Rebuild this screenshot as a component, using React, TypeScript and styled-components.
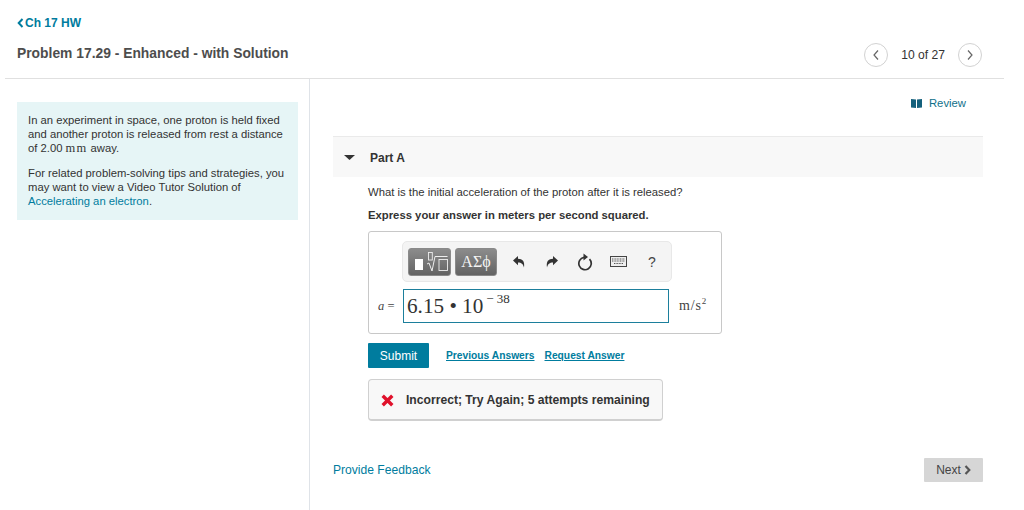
import React from 'react';
import styled, { createGlobalStyle } from 'styled-components';

const GlobalStyle = createGlobalStyle`
  html, body { margin: 0; padding: 0; background: #fff; }
  body { font-family: "Liberation Sans", Arial, sans-serif; color: #333; overflow: hidden; }
`;

const Page = styled.div`
  width: 1024px;
  height: 510px;
  padding: 0 20px 0 5px;
  box-sizing: border-box;
  overflow: hidden;
  display: flex;
  flex-direction: column;
`;

const Header = styled.header`
  height: 79px;
  box-sizing: border-box;
  flex: none;
  padding: 16px 22px 0 12px;
  border-bottom: 1px solid #e0e0e0;
`;

const BackLink = styled.a`
  display: flex;
  align-items: center;
  gap: 1px;
  height: 14px;
  font-size: 12px;
  font-weight: 700;
  line-height: 14px;
  color: #007c9e;
`;

const TitleRow = styled.div`
  display: flex;
  align-items: center;
  justify-content: space-between;
  margin-top: 8px;
  height: 34px;
`;

const Title = styled.h1`
  margin: 0;
  font-size: 13.85px;
  font-weight: 700;
  line-height: 18px;
  color: #4d4d4d;
  position: relative;
  top: -2px;
`;

const Pager = styled.div`
  display: flex;
  align-items: center;
  gap: 13px;
  font-size: 12.1px;
  color: #333;
`;

const RoundButton = styled.span`
  width: 24px;
  height: 24px;
  box-sizing: border-box;
  border: 1px solid #d2d2d2;
  border-radius: 50%;
  display: flex;
  align-items: center;
  justify-content: center;
`;

const Body = styled.div`
  flex: 1;
  display: flex;
  min-height: 0;
`;

const Sidebar = styled.aside`
  width: 305px;
  flex: none;
  box-sizing: border-box;
  padding: 23px 11px 0 12px;
  border-right: 1px solid #dfe3e8;
`;

const InfoBox = styled.div`
  background: #e6f5f6;
  padding: 11px 12px 12px 11px;
  font-size: 11.27px;
  line-height: 14px;
  color: #333;
  height: 118px;
  box-sizing: border-box;
`;

const InfoPara = styled.p`
  margin: 0 0 11px;
`;

const NoWrap = styled.span`
  white-space: nowrap;
`;

const Mathy = styled.span`
  font-family: "Liberation Serif", serif;
  font-size: 12.5px;
  letter-spacing: 1.2px;
  line-height: 12px;
`;

const Teal = styled.a`
  color: #007c9e;
`;

const Main = styled.main`
  flex: 1;
  min-width: 0;
  padding: 0 21px 0 23px;
  display: flex;
  flex-direction: column;
`;

const ReviewRow = styled.div`
  display: flex;
  justify-content: flex-end;
  align-items: center;
  gap: 7px;
  height: 14px;
  margin-top: 17px;
  padding-right: 17px;
  font-size: 11.3px;
  color: #10708a;
`;

const PartHeader = styled.div`
  margin-top: 26px;
  height: 41px;
  box-sizing: border-box;
  border-top: 1px solid #eaeaea;
  background: #f8f8f8;
  display: flex;
  align-items: center;
  padding: 1px 0 0 11px;
  gap: 15px;
  font-size: 12px;
  font-weight: 700;
  color: #333;
`;

const PartBody = styled.div`
  padding-left: 35px;
  display: flex;
  flex-direction: column;
`;

const Question = styled.p`
  margin: 8px 0 0;
  font-size: 11.3px;
  line-height: 14px;
  color: #333;
`;

const Instruction = styled.p`
  margin: 9px 0 0;
  font-size: 11.3px;
  font-weight: 700;
  line-height: 14px;
  color: #333;
`;

const AnswerCard = styled.div`
  margin-top: 9px;
  width: 354px;
  height: 103px;
  box-sizing: border-box;
  border: 1px solid #c8c8c8;
  border-radius: 3px;
  padding: 9px 0 0 9px;
`;

const Toolbar = styled.div`
  margin-left: 24px;
  width: 270px;
  height: 41px;
  box-sizing: border-box;
  background: #f4f4f4;
  border: 1px solid #e8e8e8;
  border-radius: 5px;
  display: flex;
  align-items: center;
  padding-left: 5px;
  gap: 4px;
`;

const ToolGroup = styled.span`
  height: 28px;
  width: ${({ $w }: { $w: number }) => $w}px;
  flex: none;
  box-sizing: border-box;
  border: 1px solid #8a8a8a;
  border-radius: 3px;
  background: linear-gradient(#8c8c8c, #636363);
  color: #f4f4f4;
  display: flex;
  align-items: center;
  justify-content: center;
  font-family: "Liberation Serif", serif;
  font-size: 16px;
`;

const ToolIcons = styled.div`
  display: flex;
  align-items: center;
  margin-left: 1px;
`;

const ToolIcon = styled.span`
  width: 33.3px;
  flex: none;
  display: flex;
  justify-content: center;
  font-size: 14px;
  color: #444;
`;

const InputRow = styled.div`
  margin-top: 7px;
  display: flex;
  align-items: center;
`;

const VarLabel = styled.span`
  width: 25px;
  flex: none;
  font-family: "Liberation Serif", serif;
  font-size: 12.5px;
  color: #444;
  white-space: nowrap;
  em { font-style: italic; }
`;

const AnswerInput = styled.div`
  width: 266px;
  height: 34px;
  box-sizing: border-box;
  border: 1px solid #1c7f9c;
  font-family: "Liberation Serif", serif;
  font-size: 21.2px;
  line-height: 32px;
  color: #333;
  padding-left: 3px;
  white-space: pre;
`;

const Exponent = styled.sup`
  font-size: 13px;
  line-height: 0;
  vertical-align: 10px;
  margin-left: 3px;
`;

const Unit = styled.span`
  margin-left: 10px;
  font-family: "Liberation Serif", serif;
  font-size: 14px;
  letter-spacing: 0.8px;
  color: #444;
  sup { font-size: 9px; line-height: 0; }
`;

const Actions = styled.div`
  margin-top: 9px;
  display: flex;
  align-items: center;
`;

const SubmitButton = styled.button`
  width: 61px;
  height: 25px;
  padding: 0;
  border: none;
  border-radius: 1px;
  background: #007c9e;
  color: #fff;
  font-family: inherit;
  font-size: 12px;
`;

const ActionLink = styled.a`
  margin-left: ${({ $ml }: { $ml: number }) => $ml}px;
  font-size: 10.25px;
  font-weight: 700;
  color: #007c9e;
  text-decoration: underline;
`;

const Feedback = styled.div`
  margin-top: 11px;
  width: 295px;
  height: 42px;
  box-sizing: border-box;
  background: #f8f8f8;
  border: 1px solid #d0d0d0;
  border-bottom-width: 2px;
  border-radius: 4px;
  display: flex;
  align-items: center;
  gap: 12px;
  padding: 1px 0 0 12px;
  font-size: 12.15px;
  font-weight: 700;
  color: #333;
`;

const Footer = styled.div`
  margin-top: 37px;
  display: flex;
  align-items: center;
  justify-content: space-between;
`;

const FeedbackLink = styled.a`
  font-size: 12.1px;
  color: #007c9e;
`;

const NextButton = styled.span`
  width: 59px;
  height: 24px;
  box-sizing: border-box;
  background: #d6d6d6;
  border-radius: 1px;
  display: flex;
  align-items: center;
  justify-content: center;
  gap: 3px;
  font-size: 12px;
  color: #444;
`;

const App = () => (
  <>
    <GlobalStyle />
    <Page>
      <Header>
        <BackLink>
          <svg width="7" height="10" viewBox="0 0 7 10">
            <path d="M5.5 1 L1.7 5 L5.5 9" fill="none" stroke="#007c9e" strokeWidth="2" />
          </svg>
          Ch 17 HW
        </BackLink>
        <TitleRow>
          <Title>Problem 17.29 - Enhanced - with Solution</Title>
          <Pager>
            <RoundButton>
              <svg width="8" height="12" viewBox="0 0 8 12">
                <path d="M6 1.5 L2 6 L6 10.5" fill="none" stroke="#666" strokeWidth="1.2" />
              </svg>
            </RoundButton>
            <span>10 of 27</span>
            <RoundButton>
              <svg width="8" height="12" viewBox="0 0 8 12">
                <path d="M2 1.5 L6 6 L2 10.5" fill="none" stroke="#666" strokeWidth="1.2" />
              </svg>
            </RoundButton>
          </Pager>
        </TitleRow>
      </Header>
      <Body>
        <Sidebar>
          <InfoBox>
            <InfoPara>
              In an experiment in space, one proton is held fixed and another proton is released from rest a distance{' '}
              <NoWrap>of 2.00 <Mathy>mm</Mathy> away.</NoWrap>
            </InfoPara>
            <InfoPara>
              For related problem-solving tips and strategies, you may want to view a Video Tutor Solution of <Teal>Accelerating an electron</Teal>.
            </InfoPara>
          </InfoBox>
        </Sidebar>
        <Main>
          <ReviewRow>
            <svg width="11" height="9" viewBox="0 0 11 9">
              <path d="M0 0 L5 0.6 V9 L0 8.4 Z M11 0 L6 0.6 V9 L11 8.4 Z" fill="#14607c" />
            </svg>
            Review
          </ReviewRow>
          <PartHeader>
            <svg width="11" height="5" viewBox="0 0 11 5">
              <path d="M0 0 H11 L5.5 5 Z" fill="#333" />
            </svg>
            Part A
          </PartHeader>
          <PartBody>
            <Question>What is the initial acceleration of the proton after it is released?</Question>
            <Instruction>Express your answer in meters per second squared.</Instruction>
            <AnswerCard>
              <Toolbar>
                <ToolGroup $w={43}>
                  <svg width="41" height="26" viewBox="0 0 41 26">
                    <rect x="6" y="10" width="8" height="11" fill="#fff" />
                    <rect x="19.5" y="3.5" width="3.8" height="7.5" fill="none" stroke="#eee" strokeWidth="0.9" />
                    <path d="M18 15 L20 14 L23 22 L26 7.5 H38.5" fill="none" stroke="#eee" strokeWidth="1" />
                    <rect x="30" y="10.5" width="8.5" height="11" fill="none" stroke="#eee" strokeWidth="0.9" />
                  </svg>
                </ToolGroup>
                <ToolGroup $w={42}>ΑΣϕ</ToolGroup>
                <ToolIcons>
                  <ToolIcon>
                    <svg width="14" height="14" viewBox="0 0 14 14">
                      <path d="M1 5.5 L6 1 V3.8 C10.5 3.8 13 6.5 12 12.5 C11 9 9.5 7.6 6 7.6 V10.2 Z" fill="#333" />
                    </svg>
                  </ToolIcon>
                  <ToolIcon>
                    <svg width="14" height="14" viewBox="0 0 14 14">
                      <path d="M13 5.5 L8 1 V3.8 C3.5 3.8 1 6.5 2 12.5 C3 9 4.5 7.6 8 7.6 V10.2 Z" fill="#333" />
                    </svg>
                  </ToolIcon>
                  <ToolIcon>
                    <svg width="16" height="18" viewBox="0 0 16 18">
                      <path d="M12.5 6.2 A6.2 6.2 0 1 1 7 4.4" fill="none" stroke="#333" strokeWidth="1.7" />
                      <path d="M6.5 0.6 L11 4 L6.5 7.6 Z" fill="#333" />
                    </svg>
                  </ToolIcon>
                  <ToolIcon>
                    <svg width="17" height="11" viewBox="0 0 17 11">
                      <rect x="0.5" y="0.5" width="16" height="10" fill="#eee" stroke="#444" />
                      <path d="M2 3 H15 M2 5 H15 M4 7.5 H13" stroke="#555" strokeWidth="1" strokeDasharray="1 0.6" />
                    </svg>
                  </ToolIcon>
                  <ToolIcon>?</ToolIcon>
                </ToolIcons>
              </Toolbar>
              <InputRow>
                <VarLabel><em>a</em> =</VarLabel>
                <AnswerInput>6.15 • 10<Exponent>− 38</Exponent></AnswerInput>
                <Unit>m/s<sup>2</sup></Unit>
              </InputRow>
            </AnswerCard>
            <Actions>
              <SubmitButton>Submit</SubmitButton>
              <ActionLink $ml={17}>Previous Answers</ActionLink>
              <ActionLink $ml={10}>Request Answer</ActionLink>
            </Actions>
            <Feedback>
              <svg width="13" height="13" viewBox="0 0 13 13">
                <path d="M1.7 1.7 L11.3 11.3 M11.3 1.7 L1.7 11.3" stroke="#e0112b" strokeWidth="3.4" />
              </svg>
              Incorrect; Try Again; 5 attempts remaining
            </Feedback>
          </PartBody>
          <Footer>
            <FeedbackLink>Provide Feedback</FeedbackLink>
            <NextButton>
              Next
              <svg width="7" height="10" viewBox="0 0 7 10">
                <path d="M1.5 1 L5.3 5 L1.5 9" fill="none" stroke="#555" strokeWidth="2.2" />
              </svg>
            </NextButton>
          </Footer>
        </Main>
      </Body>
    </Page>
  </>
);

export default App;
